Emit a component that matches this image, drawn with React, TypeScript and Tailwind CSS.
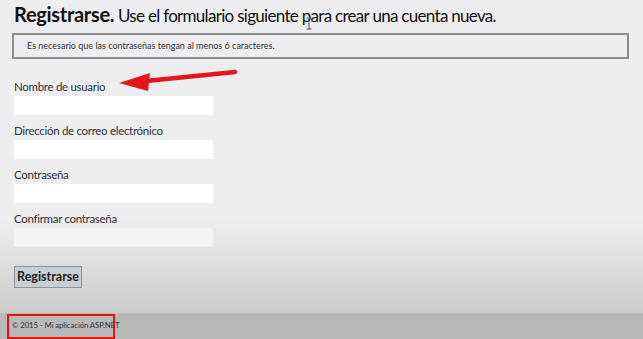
export default function App() {
  const fields = [
    { label: "Nombre de usuario", disabled: false },
    { label: "Dirección de correo electrónico", disabled: false },
    { label: "Contraseña", disabled: false },
    { label: "Confirmar contraseña", disabled: true },
  ];

  return (
    <div className="w-[643px] h-[339px] flex flex-col overflow-hidden font-['Lato',sans-serif] text-[#222]">
      <main className="relative flex-1 flex flex-col px-[12px] bg-linear-to-b from-[#eeeef0] from-[70%] to-[#cbcbcb]">
        <h2 className="pl-[2px] pt-[2px] h-[33px] text-[17px] leading-[24px] tracking-[-0.7px] text-[#111]">
          <span className="font-bold text-[20px] tracking-[-0.3px]">Registrarse.</span> Use el formulario siguiente para crear una cuenta nueva.
        </h2>

        <div className="w-[617px] h-[26px] flex items-center pl-[13px] border-2 border-[#8d8d8d] text-[9px] text-[#333]">
          Es necesario que las contraseñas tengan al menos 6 caracteres.
        </div>

        <div className="flex flex-col pt-[19px] pl-[2px]">
          {fields.map((f) => (
            <div key={f.label} className="flex flex-col h-[44px]">
              <label className="h-[18px] text-[11.5px] leading-[18px] tracking-[-0.3px] text-[#333]">{f.label}</label>
              <div className={`w-[199px] h-[19px] ${f.disabled ? "bg-[#f4f4f4]" : "bg-white"}`} />
            </div>
          ))}
        </div>

        <div className="pl-[2px] pt-[9px]">
          <button className="w-[68px] h-[22px] bg-[#c9ced3] border border-[#8e9399] text-[12.5px] font-bold text-[#222]">
            Registrarse
          </button>
        </div>

        <svg className="absolute left-[118px] top-[66px]" width="122" height="26" viewBox="0 0 122 26">
          <path d="M28 15 L117 6" stroke="#e8141b" strokeWidth="4.5" strokeLinecap="round" />
          <path d="M1 17 L32 7 L30 25 Z" fill="#e8141b" />
        </svg>

        <svg className="absolute left-[305px] top-[17px]" width="8" height="13" viewBox="0 0 8 13">
          <path d="M1.5 1 H6.5 M4 1 V12 M1.5 12 H6.5" stroke="#555" strokeWidth="1" fill="none" />
        </svg>
      </main>

      <footer className="h-[26px] bg-[#b9b9b9] flex items-center pl-[7px]">
        <div className="h-[25px] w-[108px] flex items-center px-[3px] border-2 border-[#ee1111] whitespace-nowrap text-[7.8px] tracking-[-0.1px] text-[#333]">
          © 2015 - Mi aplicación ASP.NET
        </div>
      </footer>
    </div>
  );
}
